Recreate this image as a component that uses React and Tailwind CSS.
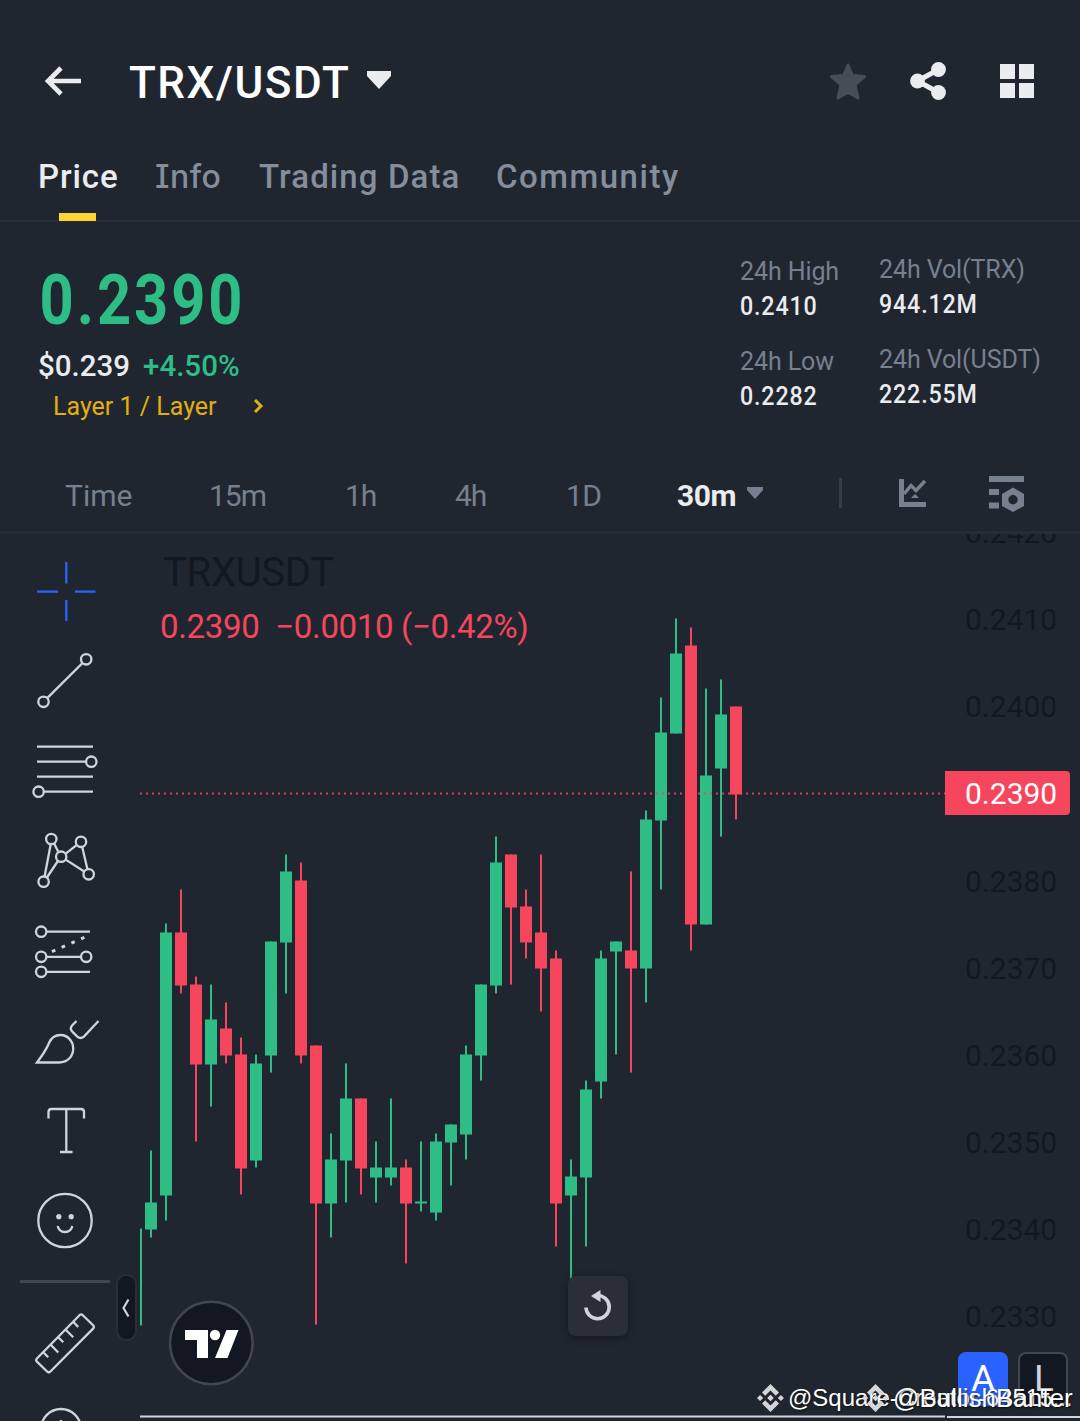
import React from "react";

const GREEN = "#2ebd85";
const RED = "#f6465d";

// [center x, high, body top, body bottom, low, rising]
const candles = [
  [151, 1150.5, 1202.5, 1229.5, 1237.5, 1],
  [166, 923.5, 932.5, 1195.5, 1220.5, 1],
  [181, 889.5, 932.5, 985.5, 993.5, 0],
  [196, 976.5, 984.5, 1064.5, 1141.5, 0],
  [211, 984.5, 1019.5, 1064.5, 1106.5, 1],
  [226, 1002.5, 1028.5, 1055.5, 1063.5, 0],
  [241, 1037.5, 1054.5, 1168.5, 1194.5, 0],
  [256, 1054.5, 1063.5, 1160.5, 1167.5, 1],
  [271, 941.5, 941.5, 1055.5, 1072.5, 1],
  [286, 854.5, 871.5, 942.5, 993.5, 1],
  [301, 862.5, 880.5, 1055.5, 1063.5, 0],
  [316, 1045.5, 1045.5, 1203.5, 1324.5, 0],
  [331, 1133.5, 1159.5, 1203.5, 1237.5, 1],
  [346, 1063.5, 1098.5, 1160.5, 1202.5, 1],
  [361, 1098.5, 1098.5, 1168.5, 1194.5, 0],
  [376, 1141.5, 1167.5, 1177.5, 1202.5, 1],
  [391, 1098.5, 1167.5, 1177.5, 1185.5, 1],
  [406, 1159.5, 1167.5, 1203.5, 1263.5, 0],
  [421, 1141.5, 1201.5, 1203.5, 1211.5, 1],
  [436, 1133.5, 1141.5, 1212.5, 1220.5, 1],
  [451, 1124.5, 1124.5, 1142.5, 1185.5, 1],
  [466, 1045.5, 1054.5, 1134.5, 1159.5, 1],
  [481, 984.5, 984.5, 1055.5, 1080.5, 1],
  [496, 836.5, 862.5, 985.5, 993.5, 1],
  [511, 854.5, 854.5, 907.5, 984.5, 0],
  [526, 889.5, 906.5, 942.5, 958.5, 0],
  [541, 854.5, 932.5, 968.5, 1011.5, 0],
  [556, 950.5, 958.5, 1203.5, 1246.5, 0],
  [571, 1159.5, 1176.5, 1195.5, 1279, 1],
  [586, 1080.5, 1089.5, 1177.5, 1246.5, 1],
  [601, 950.5, 958.5, 1081.5, 1098.5, 1],
  [616, 941.5, 941.5, 951.5, 1054.5, 1],
  [631, 871.5, 950.5, 968.5, 1072.5, 0],
  [646, 810.5, 819.5, 968.5, 1002.5, 1],
  [661, 697.5, 732.5, 820.5, 889.5, 1],
  [676, 618.5, 653.5, 733.5, 733.5, 1],
  [691, 627.5, 645.5, 924.5, 950.5, 0],
  [706, 688.5, 775.5, 924.5, 924.5, 1],
  [721, 679.5, 714.5, 768.5, 836.5, 1],
  [736, 706.5, 706.5, 794.5, 819.5, 0],
];

const prices = ["0.2420", "0.2410", "0.2400", "0.2390", "0.2380", "0.2370", "0.2360", "0.2350", "0.2340", "0.2330"];

function Tool({ y, children }) {
  return (
    <svg
      className="block h-[90px] w-[130px] shrink-0"
      viewBox={`0 ${y} 130 90`}
      fill="none"
      stroke="#d1d4dc"
      strokeWidth="2.300"
    >
      {children}
    </svg>
  );
}

function Toolbar() {
  return (
    <div className="flex w-[140px] shrink-0 flex-col pt-[12px]">
      <Tool y={546}>
        <path stroke="#2962ff" d="M66.300 562v21.500M66.300 600v21M37 591.700h21M75 591.700h20.500" />
      </Tool>
      <Tool y={636}>
        <circle cx="86.200" cy="659.300" r="5.200" />
        <circle cx="43.500" cy="701.800" r="5.200" />
        <path d="M82.500 663 47.200 698.100" />
      </Tool>
      <Tool y={726}>
        <path d="M37 746.700h56M37 761.700h49M37 776.700h56M44 791.700h49" />
        <circle cx="91.300" cy="761.700" r="5.200" />
        <circle cx="38.600" cy="791.700" r="5.200" />
      </Tool>
      <Tool y={816}>
        <circle cx="51.300" cy="839" r="5.200" />
        <circle cx="81" cy="841.800" r="5.200" />
        <circle cx="61.200" cy="856.700" r="5.200" />
        <circle cx="88.700" cy="874.300" r="5.200" />
        <circle cx="43.600" cy="881.700" r="5.200" />
        <path d="M50.700 844.200 44.600 876.500M54.100 843.500l4.300 8.500M57.900 861 46.900 877.500M65.700 853.700l10.900-8.600M65.700 859.600 84.200 871.500M82.200 847l5.200 22.100" />
      </Tool>
      <Tool y={906}>
        <circle cx="41.200" cy="931.700" r="5.200" />
        <circle cx="41.200" cy="956.800" r="5.200" />
        <circle cx="86.200" cy="956.800" r="5.200" />
        <circle cx="41.200" cy="971.800" r="5.200" />
        <path d="M47 931.700h43M47 956.800h34M47 971.800h43" />
        <path strokeWidth="3" strokeDasharray="3.600 7" d="M52 951.700 87.500 936" />
      </Tool>
      <Tool y={996}>
        <path d="M37 1062.500h22c9 0 14.200-6.500 14.200-14 0-7.700-5.900-13.500-12.700-13.500-5.500 0-9.500 3.300-11.500 8-2.300 6-6.200 11.700-12 19.500z" />
        <path d="M76.500 1021l-4.200 4.300c-2 2.200-2 4.200 0 6.300l5 5c2.200 1.900 4.400 1.900 6.600 0L98.500 1021" />
      </Tool>
      <Tool y={1086}>
        <path d="M48.500 1118.500v-6.500q0-3 3-3h29.500q3 0 3 3v6.500M66.300 1109v42.500M60 1152h12.500" />
      </Tool>
      <Tool y={1176}>
        <circle cx="65" cy="1220.500" r="26.700" />
        <circle cx="58.800" cy="1216.700" r="2.600" fill="#d1d4dc" stroke="none" />
        <circle cx="71.200" cy="1216.700" r="2.600" fill="#d1d4dc" stroke="none" />
        <path d="M57.700 1226c1.600 8 13 8 14.600 0" />
      </Tool>
      <div className="ml-5 mt-[14px] h-[3px] w-[90px] shrink-0 bg-[#434651]" />
      <div className="h-[15px] shrink-0" />
      <Tool y={1298}>
        <path d="M36.900 1358.500 79.500 1315.200q1.700-1.600 3.300 0l10.300 10.100q1.700 1.700 0 3.300L50.400 1371.500q-1.600 1.600-3.300 0l-10.200-9.800q-1.600-1.600 0-3.200zM43.500 1352.500l4.700 4.700M51 1345l7.200 7.500M58.500 1337.500l4.700 4.700M66 1330l7.200 7.200M73.500 1322l4.700 5" />
      </Tool>
      <Tool y={1388}>
        <circle cx="61" cy="1429" r="20" />
        <path d="M61 1420v18" />
      </Tool>
    </div>
  );
}

function Chart() {
  return (
    <div className="relative h-[887px] w-[805px] shrink-0">
      <svg className="absolute inset-0" width="805" height="887" viewBox="140 534 805 887">
        <rect x="140" y="1228.500" width="2" height="97" fill={GREEN} />
        {candles.map(([x, h, t, b, l, up]) => (
          <g key={x} fill={up ? GREEN : RED}>
            <rect x={x - 1} y={h} width="2" height={l - h} />
            <rect x={x - 6} y={t} width="12" height={b - t} />
          </g>
        ))}
        <path d="M140 793.500H945" stroke={RED} strokeWidth="2" strokeDasharray="2 4" opacity=".85" />
        <path d="M140 1416.500H945" stroke="#d1d4dc" strokeWidth="2" />
      </svg>
      <div className="relative pl-[23px] pt-[14px] font-[Roboto] text-[40px] leading-[49px] tracking-[-0.3px] text-[#131722]">
        TRXUSDT
      </div>
      <div className="relative flex gap-[16px] pl-5 pt-[10px] font-[Roboto] text-[33px] leading-[40px] tracking-[-0.35px] text-[#f6465d]">
        <span>0.2390</span>
        <span>−0.0010 (−0.42%)</span>
      </div>
      <svg className="absolute left-[29px] top-[766px]" width="86" height="86" viewBox="0 0 86 86">
        <circle cx="42.300" cy="43" r="41.300" fill="#131722" stroke="#434651" strokeWidth="2.500" />
        <g fill="#fff">
          <path d="M16 30h23v28H28V40H16z" />
          <circle cx="46" cy="35" r="5.200" />
          <path d="M57.500 30H69.500L58.500 58H46z" />
        </g>
      </svg>
      <div className="absolute left-[428px] top-[742px] flex size-[60px] items-center justify-center rounded-lg bg-[#2a2e39] shadow-[0_2px_8px_rgba(0,0,0,0.4)]">
        <svg width="34" height="34" viewBox="0 0 34 34" fill="none">
          <path d="M5 18.500A11.600 11.600 0 1 0 17 6.500" stroke="#d1d4dc" strokeWidth="3.600" />
          <path d="M19.500 1v12L10 7z" fill="#d1d4dc" />
        </svg>
      </div>
      <div className="absolute left-[-24px] top-[740px] flex h-[67px] w-[21px] items-center justify-center rounded-[10px] border-2 border-[#2a2e39] bg-[#131722]">
        <svg className="mr-[2px]" width="8" height="20" viewBox="0 0 8 20" fill="none" stroke="#d1d4dc" strokeWidth="2.200">
          <path d="M6.500 1.500 1.500 10l5 8.500" />
        </svg>
      </div>
    </div>
  );
}

function Axis() {
  return (
    <div className="relative h-[887px] w-[135px] shrink-0 font-[Roboto] text-[30px] text-[#131722]">
      <div className="flex h-full flex-col overflow-hidden">
        <div className="-mt-[45.500px] flex flex-col">
          {prices.map((p) =>
            p === "0.2390" ? (
              <div key={p} className="flex h-[87.150px] shrink-0 items-center">
                <div className="h-[44px] w-[125px] rounded-r bg-[#f6465d] pl-5 leading-[45px] text-white">{p}</div>
              </div>
            ) : (
              <div key={p} className="flex h-[87.150px] shrink-0 items-center pl-5 pt-px">
                {p}
              </div>
            )
          )}
        </div>
      </div>
      <div className="absolute left-[13px] top-[818px] flex gap-[10px] text-[37px] leading-[54px]">
        <div className="h-[54px] w-[50px] rounded-lg bg-[#2962ff] text-center text-white">A</div>
        <div className="h-[54px] w-[50px] rounded-lg border-2 border-[#434651] bg-[#131722] pl-[14px] leading-[50px] text-[#d1d4dc]">
          L
        </div>
      </div>
      <div className="absolute left-[2px] top-[881.500px] h-[2px] w-[133px] bg-[#d1d4dc]" />
    </div>
  );
}

function BinanceMark() {
  return (
    <svg className="shrink-0" width="27" height="28" viewBox="0 0 27 28" fill="#d4d5d9">
      <path d="M13.500 0 22 8.500l-3.200 3.200-5.300-5.300-5.300 5.300L5 8.500zM13.500 28 22 19.500l-3.200-3.200-5.300 5.300-5.300-5.300L5 19.500zM3.100 10.900 6.200 14l-3.100 3.100L0 14zM23.900 10.900 27 14l-3.100 3.100-3.100-3.100zM13.500 10.700l3.300 3.300-3.300 3.300-3.300-3.300z" />
    </svg>
  );
}

function Stat({ label, value }) {
  return (
    <div className="h-[90px]">
      <div className="h-[35px] text-[25px] leading-[30px] tracking-[-0.1px] text-[#76808f]">{label}</div>
      <div className="origin-left scale-x-[0.93] text-[25px] font-medium leading-[30px] tracking-[0.9px] text-[#eaecef]">
        {value}
      </div>
    </div>
  );
}

export default function App() {
  return (
    <div className="relative h-[1421px] w-[1080px] overflow-hidden bg-[#202630] font-[Roboto] text-[#eaecef]">
      <header className="flex h-[150px] items-center pl-[44px] pt-[12px]">
        <svg width="38" height="30" viewBox="0 0 38 30" fill="none" stroke="#eaecef" strokeWidth="4.600">
          <path d="M37 15H4M17 2 4 15l13 13" />
        </svg>
        <h1 className="ml-[47px] mt-[3px] text-[44px] font-medium tracking-[1.500px] text-white">TRX/USDT</h1>
        <svg className="ml-[17px] mt-[-2px]" width="24" height="18" viewBox="0 0 24 18" fill="#eaecef">
          <path d="M0 0h24v5L12 18 0 5z" />
        </svg>
        <div className="ml-auto mr-[46px] flex items-center">
          <svg width="38" height="38" viewBox="0 0 38 38" fill="#474d57" stroke="#474d57" strokeWidth="3" strokeLinejoin="round">
            <path d="M19 3l4.300 10.500L35.500 14.500l-9.500 8L29 36 19 30.500 9 36l3-13.500L2.500 14.500l12.200-1z" />
          </svg>
          <svg className="ml-[43px]" width="36" height="38" viewBox="0 0 36 38" fill="#eaecef">
            <path d="M28.500 7.500 7.500 19l21 11.500" fill="none" stroke="#eaecef" strokeWidth="5" />
            <circle cx="28.500" cy="7.500" r="7.400" />
            <circle cx="7.500" cy="19" r="7.400" />
            <circle cx="28.500" cy="30.500" r="7.400" />
          </svg>
          <div className="ml-[54px] grid grid-cols-2 gap-1">
            <i className="size-[15px] bg-[#eaecef]" />
            <i className="size-[15px] bg-[#eaecef]" />
            <i className="size-[15px] bg-[#eaecef]" />
            <i className="size-[15px] bg-[#eaecef]" />
          </div>
        </div>
      </header>
      <nav className="flex h-[72px] border-b-2 border-[#272d37] pl-[38px] text-[33px] font-medium leading-[53px] text-[#848e9c]">
        <div className="flex w-[117px] flex-col text-[#eaecef]">
          <span className="tracking-[0.9px]">Price</span>
          <i className="ml-[21px] mt-[10px] h-[8px] w-[37px] shrink-0 bg-[#fcd535]" />
        </div>
        <span className="w-[104px] font-[Inter] text-[32px] tracking-[0.5px] [font-feature-settings:'cv08']">Info</span>
        <span className="w-[237px] tracking-[1.100px]">Trading Data</span>
        <span className="tracking-[1.500px]">Community</span>
      </nav>
      <section className="flex h-[228px] justify-between pl-[38px]">
        <div className="pt-[36px]">
          <div className="origin-left translate-x-[1.500px] scale-x-[0.84] text-[71px] font-bold leading-[84px] tracking-[3.500px] text-[#2ebd85]">
            0.2390
          </div>
          <div className="mt-[4px] flex gap-[13px] text-[29.500px] font-medium leading-[40px]">
            <span>$0.239</span>
            <span className="text-[#2ebd85]">+4.50%</span>
          </div>
          <div className="flex items-center pl-[15px] pt-px text-[25px] leading-[40px] text-[#e2ae10]">
            Layer 1 / Layer
            <svg className="mb-[2px] ml-[36px]" width="11" height="14" viewBox="0 0 11 14" fill="none" stroke="#e2ae10" strokeWidth="3">
              <path d="M2 1l6 6-6 6" />
            </svg>
          </div>
        </div>
        <div className="flex w-[340px] pt-[33px]">
          <div className="w-[139px] pt-[2px]">
            <Stat label="24h High" value="0.2410" />
            <Stat label="24h Low" value="0.2282" />
          </div>
          <div>
            <Stat label="24h Vol(TRX)" value="944.12M" />
            <Stat label="24h Vol(USDT)" value="222.55M" />
          </div>
        </div>
      </section>
      <div className="flex h-[84px] items-center border-b-[3px] border-[#272d37] pl-[65px] pt-[9px] text-[30px] leading-[40px] text-[#76808f]">
        <span className="w-[144px] pt-px">Time</span>
        <span className="w-[136px] pt-px tracking-[-1px]">15m</span>
        <span className="w-[110px] pt-px tracking-[-1px]">1h</span>
        <span className="w-[111px] pt-px tracking-[-1px]">4h</span>
        <span className="w-[111px] pt-px tracking-[-0.500px]">1D</span>
        <span className="w-[70px] pt-px font-bold tracking-[-0.500px] text-[#eaecef]">30m</span>
        <svg className="mb-[4px]" width="16" height="12" viewBox="0 0 16 12" fill="#76808f">
          <path d="M0 0h16v3L8 12 0 3z" />
        </svg>
        <i className="mb-[4px] ml-[76px] h-[30px] w-[3px] bg-[#373d48]" />
        <svg className="mb-[5px] ml-[57px]" width="28" height="28" viewBox="0 0 28 28" fill="none" stroke="#76808f">
          <path strokeWidth="5" d="M2.500 0v25.500H27" />
          <path strokeWidth="3.500" d="M5 15l7-8.500 5 5L26 2" />
          <path d="M12 19l4-4 4 4z" fill="#76808f" stroke="none" />
        </svg>
        <svg className="mb-[3px] ml-[62px]" width="36" height="37" viewBox="0 0 36 37" fill="#76808f">
          <path d="M0 1h35v6H0zM0 14h10v6H0zM0 27.500h10v6H0z" />
          <path fillRule="evenodd" d="M24 12.500l11 6.500v12l-11 6-11-6V19zM24 20a4.700 4.700 0 1 0 0 9.400a4.700 4.700 0 1 0 0-9.400z" />
        </svg>
      </div>
      <main className="flex h-[887px] overflow-hidden">
        <Toolbar />
        <Chart />
        <Axis />
      </main>
      <div className="absolute left-[757px] top-[1383px] flex items-center gap-[4px] font-['Liberation_Sans'] text-[24px] leading-[30px] text-white [text-shadow:1px_1px_2px_rgba(0,0,0,0.6)]">
        <BinanceMark />
        <span className="whitespace-nowrap">@Square-Creator-64515...</span>
      </div>
      <div className="absolute left-[862px] top-[1383px] flex items-center gap-[4px] font-['Liberation_Sans'] text-[26px] leading-[30px] text-white [text-shadow:1px_1px_2px_rgba(0,0,0,0.6)]">
        <BinanceMark />
        <span className="whitespace-nowrap">@BullishBanter</span>
      </div>
    </div>
  );
}
